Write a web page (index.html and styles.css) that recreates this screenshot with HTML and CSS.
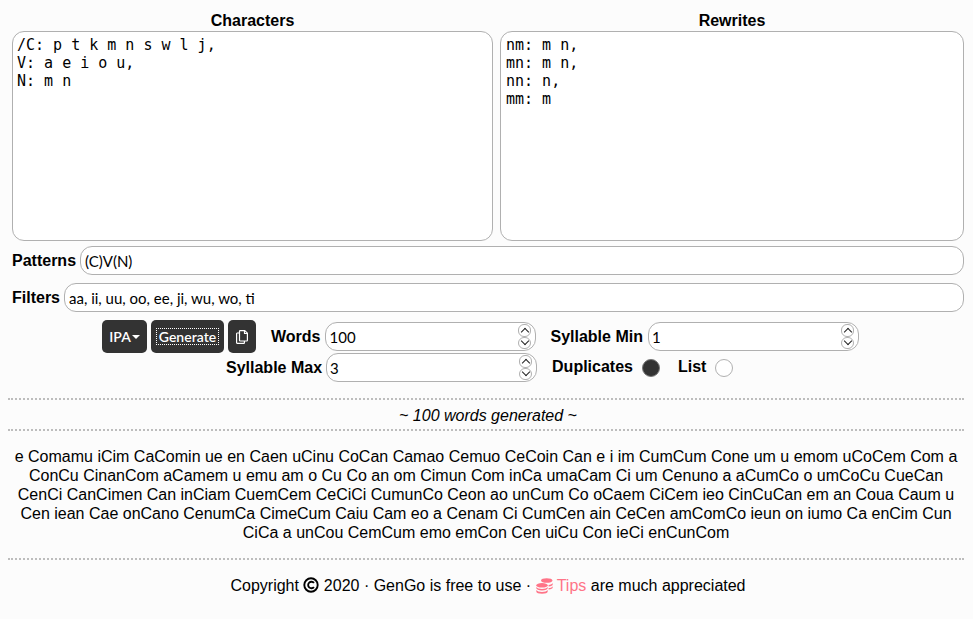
FILE: index.html
```html
<!DOCTYPE html>
<html lang="en">
<head>
<meta charset="utf-8">
<title>GenGo</title>
<link rel="stylesheet" href="styles.css">
</head>
<body>
<main class="page">
  <section class="editors">
    <div class="editor">
      <h2 class="editor-title">Characters</h2>
      <textarea class="editor-box" spellcheck="false">/C: p t k m n s w l j,
V: a e i o u,
N: m n</textarea>
    </div>
    <div class="editor">
      <h2 class="editor-title">Rewrites</h2>
      <textarea class="editor-box" spellcheck="false">nm: m n,
mn: m n,
nn: n,
mm: m</textarea>
    </div>
  </section>

  <label class="line-field">
    <span class="label">Patterns</span>
    <input class="text-input" type="text" value="(C)V(N)">
  </label>
  <label class="line-field">
    <span class="label">Filters</span>
    <input class="text-input" type="text" value="aa, ii, uu, oo, ee, ji, wu, wo, ti">
  </label>

  <div class="controls">
    <div class="control-row row-one">
      <div class="buttons">
        <button class="btn btn-ipa" type="button">IPA<span class="caret"></span></button>
        <button class="btn btn-generate" type="button"><span class="focus-ring">Generate</span></button>
        <button class="btn btn-copy" type="button" aria-label="Copy">
          <svg width="12" height="14" viewBox="0 0 12 14" fill="none" stroke="#fff" stroke-width="1.200" stroke-linejoin="round"><path d="M3.500 3H1.200a.7.7 0 0 0-.6.7v9a.7.7 0 0 0 .6.7h6.600a.7.7 0 0 0 .6-.7V11"/><path d="M4.200.6h4.600l2.600 2.600v7.100a.7.7 0 0 1-.7.7H4.200a.7.7 0 0 1-.7-.7V1.300a.7.7 0 0 1 .7-.7z"/><path d="M8.500.8v2.700h2.700"/></svg>
        </button>
      </div>
      <label class="num-field">
        <span class="label">Words</span>
        <span class="num-wrap"><input class="num-input" type="text" value="100"><span class="spin"><i class="spin-btn up"></i><i class="spin-btn down"></i></span></span>
      </label>
      <label class="num-field field-min">
        <span class="label">Syllable Min</span>
        <span class="num-wrap"><input class="num-input" type="text" value="1"><span class="spin"><i class="spin-btn up"></i><i class="spin-btn down"></i></span></span>
      </label>
    </div>
    <div class="control-row row-two">
      <label class="num-field">
        <span class="label">Syllable Max</span>
        <span class="num-wrap"><input class="num-input" type="text" value="3"><span class="spin"><i class="spin-btn up"></i><i class="spin-btn down"></i></span></span>
      </label>
      <div class="radio-field field-dup"><span class="label">Duplicates</span><span class="radio radio-on"></span></div>
      <div class="radio-field field-list"><span class="label">List</span><span class="radio"></span></div>
    </div>
  </div>

  <hr class="rule rule-first">
  <p class="status">~ 100 words generated ~</p>
  <hr class="rule">
  <p class="words">e Comamu iCim CaComin ue en Caen uCinu CoCan Camao Cemuo CeCoin Can e i im CumCum Cone um u emom uCoCem Com a ConCu CinanCom aCamem u emu am o Cu Co an om Cimun Com inCa umaCam Ci um Cenuno a aCumCo o umCoCu CueCan CenCi CanCimen Can inCiam CuemCem CeCiCi CumunCo Ceon ao unCum Co oCaem CiCem ieo CinCuCan em an Coua Caum u Cen iean Cae onCano CenumCa CimeCum Caiu Cam eo a Cenam Ci CumCen ain CeCen amComCo ieun on iumo Ca enCim Cun CiCa a unCou CemCum emo emCon Cen uiCu Con ieCi enCunCom</p>
  <hr class="rule">
  <footer class="footer">
    Copyright
    <svg class="copy-mark" width="16" height="16" viewBox="0 0 16 16" fill="none" stroke="#000"><circle cx="8" cy="8" r="6.700" stroke-width="1.900"/><path d="M11 5.900A3.300 3.300 0 1 0 11 10.100" stroke-width="1.900"/></svg>
    2020 · GenGo is free to use ·
    <svg class="coins" width="17" height="16" viewBox="0 0 17 16" fill="#ff7488"><ellipse cx="6" cy="7.300" rx="5.700" ry="2.300"/><path d="M.3 9c.8 1.200 3 1.900 5.700 1.900S10.900 10.200 11.700 9v1.300c0 1.200-2.500 2.100-5.700 2.100S.3 11.500.3 10.300z"/><path d="M.3 12c.8 1.200 3 1.900 5.700 1.900s4.900-.7 5.700-1.900v1.500C11.700 14.800 9.200 15.800 6 15.800S.3 14.800.3 13.500z"/><ellipse cx="10.700" cy="2.500" rx="5.700" ry="2.300"/><path d="M12.600 7c2.300-.2 3.500-1 4.100-1.900v1.300c0 1-1.600 1.900-4.100 2.100zM12.600 10.100c2.300-.2 3.500-1 4.100-1.900v1.400c0 1-1.600 1.800-4.100 2z"/></svg>
    <a class="tips" href="#">Tips</a> are much appreciated
  </footer>
</main>
</body>
</html>
```

FILE: styles.css
```css
* { box-sizing: border-box; }

html, body { margin: 0; background: #fcfcfc; }

body {
  font-family: "Liberation Sans", Arial, sans-serif;
  font-size: 16px;
  color: #000;
  height: 619px;
  overflow: hidden;
}

.page { padding: 12px 9px 0 8px; }

.editors {
  display: grid;
  grid-template-columns: 481px 464px;
  column-gap: 7px;
  padding-left: 4px;
}

.editor-title {
  margin: 0;
  font-size: 16px;
  line-height: 18px;
  font-weight: 700;
  text-align: center;
}

.editor-box {
  display: block;
  width: 100%;
  height: 210px;
  margin-top: 1px;
  padding: 4px 4px;
  background: #fff;
  border: 1px solid #b0b0b0;
  border-radius: 12px;
  font-family: "DejaVu Sans Mono", monospace;
  font-size: 15px;
  line-height: 18px;
  color: #000;
  resize: none;
  outline: none;
}

.editor:last-child .editor-box { padding-left: 5px; }

.line-field {
  display: flex;
  align-items: center;
  gap: 4px;
  height: 29px;
  margin: 0 0 8px 4px;
}

.editors + .line-field { margin-top: 5px; }

.label { font-weight: 700; font-size: 16px; white-space: nowrap; }

.text-input, .num-input {
  height: 29px;
  padding: 0 4px;
  background: #fff;
  border: 1px solid #b0b0b0;
  border-radius: 12px;
  font-family: Lato, sans-serif;
  font-size: 15px;
  color: #000;
  outline: none;
}

.text-input { flex: 1; }

.controls { display: flex; flex-direction: column; }

.control-row { display: flex; align-items: center; }

.row-one { height: 33px; padding-left: 94px; }
.row-two { height: 29px; padding-left: 218px; }

.buttons { display: flex; gap: 4px; margin-right: 15px; }

.btn {
  display: flex;
  align-items: center;
  justify-content: center;
  height: 33px;
  padding: 0;
  border: 0;
  border-radius: 5px;
  background: #333;
  color: #fff;
  font-family: Lato, sans-serif;
  font-size: 14px;
  font-weight: 600;
}

.btn-ipa { width: 45px; }
.btn-generate { width: 73px; }
.btn-copy { width: 28px; }

.caret {
  width: 0;
  height: 0;
  margin-left: 1px;
  border-left: 4px solid transparent;
  border-right: 4px solid transparent;
  border-top: 4px solid #fff;
}

.focus-ring {
  padding: 0 2px;
  line-height: 15px;
  border: 1px dotted #fff;
}

.num-field { display: flex; align-items: center; gap: 4px; }

.row-one .num-field { gap: 5px; }

.num-wrap { position: relative; display: block; width: 211px; height: 29px; }

.num-input { display: block; width: 100%; padding-left: 3px; }

.row-one .field-min { margin-left: 14px; }

.spin {
  position: absolute;
  top: 2px;
  right: 5px;
  display: flex;
  flex-direction: column;
}

.spin-btn {
  position: relative;
  display: block;
  width: 13px;
  height: 12.500px;
  background: #fff;
  border: 1px solid #b0b0b0;
  border-radius: 6px;
}

.spin-btn::after {
  content: "";
  position: absolute;
  left: 3px;
  width: 5px;
  height: 5px;
  border-left: 1.500px solid #222;
  border-top: 1.500px solid #222;
  transform: rotate(45deg);
  top: 3.500px;
}

.spin-btn.down::after { transform: rotate(225deg); top: 0.500px; }

.radio-field { display: flex; align-items: center; gap: 9px; }
.radio-field .label { margin-top: -2px; }

.field-dup { margin-left: 15px; }
.field-list { margin-left: 18px; }

.radio {
  display: block;
  width: 18px;
  height: 18px;
  background: #fff;
  border: 1px solid #b0b0b0;
  border-radius: 50%;
}

.radio-on { background: #333; border-color: #777; }

.rule {
  height: 0;
  margin: 0;
  border: 0;
  border-top: 2px dotted #bdbdbd;
}

.rule-first { margin-top: 16px; }

.status {
  margin: 0;
  height: 29px;
  padding: 1px 0 0 4px;
  line-height: 29px;
  font-style: italic;
  text-align: center;
}

.words {
  margin: 0;
  height: 127px;
  padding: 16px 0 0;
  line-height: 19px;
  text-align: center;
}

.footer {
  padding: 17px 0 0 4px;
  line-height: 18px;
  text-align: center;
}

.copy-mark { vertical-align: -2px; }

.coins { vertical-align: -3px; }

.tips { color: #ff7488; text-decoration: none; }
```
